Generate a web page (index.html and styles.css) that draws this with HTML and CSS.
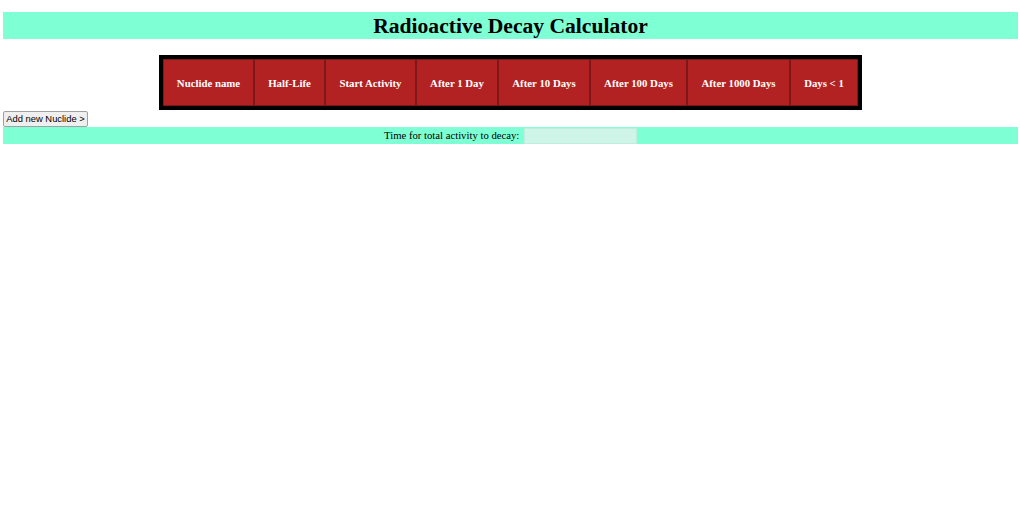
FILE: index.html
```html
<!DOCTYPE html>
<html>
<head>
<meta charset="utf-8">
<title>Radioactive Decay Calculator</title>
<link rel="stylesheet" href="styles.css">
</head>
<body>
<h1 class="title">Radioactive Decay Calculator</h1>
<table class="nuclides">
  <tr>
    <th class="c1">Nuclide name</th>
    <th class="c2">Half-Life</th>
    <th class="c3">Start Activity</th>
    <th class="c4">After 1 Day</th>
    <th class="c5">After 10 Days</th>
    <th class="c6">After 100 Days</th>
    <th class="c7">After 1000 Days</th>
    <th class="c8">Days &lt; 1</th>
  </tr>
</table>
<button class="add-btn">Add new Nuclide &gt;</button>
<div class="total">
  <span class="total-label">Time for total activity to decay:</span>
  <input class="total-input" type="text">
</div>
</body>
</html>
```
FILE: styles.css
```css
html, body {
  margin: 0;
  padding: 0;
  background: #ffffff;
}
body {
  padding: 0 2px 0 3px;
  font-family: "Liberation Serif", "Times New Roman", serif;
}
.title {
  margin: 12px 0 0 0;
  height: 27px;
  line-height: 28px;
  background: #7fffd4;
  text-align: center;
  font-size: 21.6px;
  font-weight: bold;
  color: #000;
}
.nuclides {
  margin: 16px auto 0 auto;
  border: 4px solid #000;
  border-collapse: separate;
  border-spacing: 0;
  background: #b22222;
}
.nuclides th {
  box-sizing: border-box;
  height: 47px;
  padding: 0;
  background: #b22222;
  border: 1px solid #7e1717;
  color: #fff;
  font-size: 10.8px;
  font-weight: bold;
  text-align: center;
  white-space: nowrap;
}
.c1 { width: 91px; }
.c2 { width: 71px; }
.c3 { width: 91px; }
.c4 { width: 82px; }
.c5 { width: 92px; }
.c6 { width: 97px; }
.c7 { width: 103px; }
.c8 { width: 68px; }
.add-btn {
  display: block;
  margin: 1px 0 0 0;
  height: 16px;
  width: 85px;
  padding: 0;
  box-sizing: border-box;
  white-space: nowrap;
  font-family: "Liberation Sans", Arial, sans-serif;
  font-size: 9.4px;
  line-height: 14px;
  color: #000;
  background: #efefef;
  border: 1px solid #a0a0a0;
  border-radius: 2px;
}
.total {
  height: 17px;
  background: #7fffd4;
  text-align: center;
  font-size: 10.7px;
  line-height: 17px;
  color: #000;
}
.total-label {
  vertical-align: top;
}
.total-input {
  box-sizing: border-box;
  width: 113px;
  height: 16px;
  margin: 1px 0 0 2px;
  padding: 0;
  vertical-align: top;
  background: #cff5e9;
  border: 1px solid #bfeede;
}
```
